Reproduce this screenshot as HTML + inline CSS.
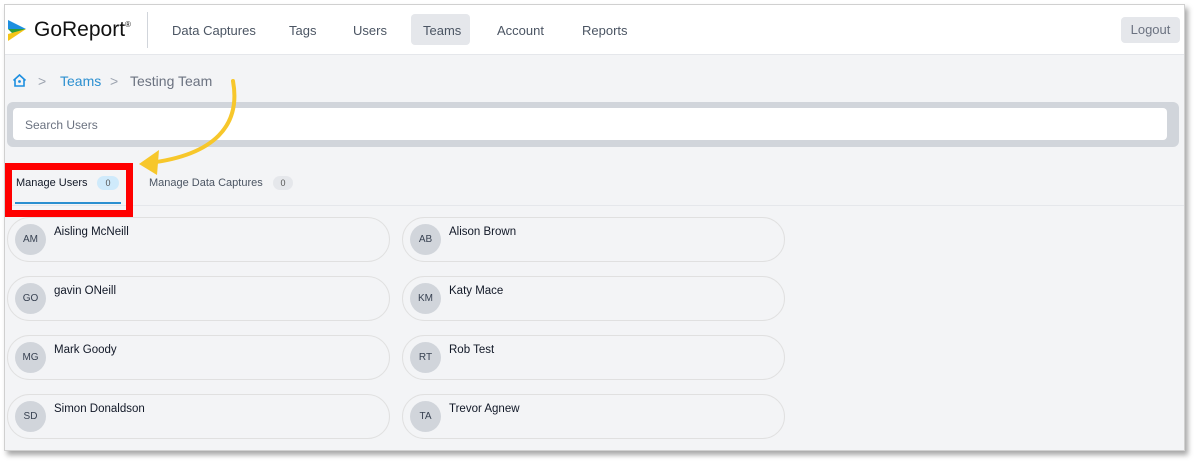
<!DOCTYPE html>
<html><head><style>
*{margin:0;padding:0;box-sizing:border-box}
body{width:1198px;height:464px;background:#fff;font-family:"Liberation Sans",sans-serif;position:relative;overflow:hidden}
.frame{position:absolute;left:4px;top:4px;width:1181px;height:447px;background:#f3f4f6;border:1px solid #d0d0d0;box-shadow:3px 4px 5px rgba(0,0,0,.35);overflow:hidden}
.nav{position:absolute;left:0;top:0;right:0;height:50px;background:#fff;border-bottom:1px solid #e5e7eb}
.nav a{position:absolute;top:18px;font-size:13px;color:#4b5563}
.teams{position:absolute;left:406px;top:9px;width:59px;height:31px;background:#e5e7eb;border-radius:4px}
.logout{position:absolute;left:1116px;top:12px;width:59px;height:26px;background:#e5e7eb;border-radius:4px;font-size:13px;color:#6b7280;text-align:center;line-height:26px}
.abs{position:absolute}
.card{position:absolute;width:383px;height:45px;border:1px solid #e0e0e0;border-radius:23px;background:#f3f4f6}
.av{position:absolute;left:7px;top:6px;width:31px;height:31px;border-radius:50%;background:#d1d5db;font-size:10px;color:#374151;text-align:center;line-height:31px}
.nm{position:absolute;left:46px;top:8px;font-size:11.5px;color:#111827}
</style></head><body>
<div class="frame">
 <div class="nav">
  <svg class="abs" style="left:3px;top:15px" width="20" height="22" viewBox="0 0 20 22"><polygon points="0,0 18,9 0,9" fill="#1d8fe0"/><polygon points="0,9 18,9 5,14" fill="#2a9d3a"/><polygon points="0,14 18,9 0,21" fill="#f5c518"/></svg>
  <div class="abs" style="left:29px;top:13px;font-size:21px;color:#111">GoReport<sup style="font-size:8px;vertical-align:top;position:relative;top:2px">®</sup></div>
  <div class="abs" style="left:142px;top:7px;width:1px;height:36px;background:#d1d5db"></div>
  <div class="teams"></div>
  <a style="left:167px">Data Captures</a><a style="left:284px">Tags</a><a style="left:348px">Users</a><a style="left:418px">Teams</a><a style="left:492px">Account</a><a style="left:577px">Reports</a>
  <div class="logout">Logout</div>
 </div>
 <svg class="abs" style="left:7px;top:68px" width="15" height="15" viewBox="0 0 15 15"><path d="M1.5 7.5L7.5 2l6 5.5M3 6.5V13h9V6.5" fill="none" stroke="#1d8fe0" stroke-width="1.6"/><circle cx="7.5" cy="8.5" r="1.4" fill="#1d8fe0"/></svg>
 <div class="abs" style="left:33px;top:68px;font-size:14px;color:#9ca3af">&gt;</div>
 <div class="abs" style="left:55px;top:68px;font-size:14px;color:#2b8fd0">Teams</div>
 <div class="abs" style="left:105px;top:68px;font-size:14px;color:#9ca3af">&gt;</div>
 <div class="abs" style="left:125px;top:68px;font-size:14px;color:#6b7280">Testing Team</div>
 <div class="abs" style="left:2px;top:97px;width:1172px;height:45px;background:#d1d5db;border-radius:6px"></div>
 <div class="abs" style="left:8px;top:103px;width:1154px;height:32px;background:#fff;border-radius:4px;font-size:12px;color:#6b7280;padding:10px 0 0 12px">Search Users</div>
 <div class="abs" style="left:0;top:200px;width:1181px;height:1px;background:#e5e7eb"></div>
 <div class="abs" style="left:11px;top:172px;font-size:11px;color:#111827">Manage Users</div>
 <div class="abs" style="left:92px;top:171px;width:22px;height:14px;border-radius:7px;background:#cfeafb;font-size:9px;color:#555;text-align:center;line-height:14px">0</div>
 <div class="abs" style="left:10px;top:197px;width:106px;height:2px;background:#2b8fd0"></div>
 <div class="abs" style="left:144px;top:172px;font-size:11px;color:#4b5563">Manage Data Captures</div>
 <div class="abs" style="left:268px;top:171px;width:20px;height:14px;border-radius:7px;background:#e5e7eb;font-size:9px;color:#555;text-align:center;line-height:14px">0</div>
 <div class="abs" style="left:0;top:158px;width:128px;height:54px;border:7px solid #ff0000"></div>
 <svg class="abs" style="left:0;top:0" width="300" height="200"><path d="M228 76 C236 120 210 150 144 158" fill="none" stroke="#f7c72b" stroke-width="4" stroke-linecap="round"/><polygon points="134,159 154,145 152,170" fill="#f7c72b"/></svg>
 <div class="card" style="left:2px;top:212px"><div class="av">AM</div><div class="nm">Aisling McNeill</div></div>
 <div class="card" style="left:2px;top:271px"><div class="av">GO</div><div class="nm">gavin ONeill</div></div>
 <div class="card" style="left:2px;top:330px"><div class="av">MG</div><div class="nm">Mark Goody</div></div>
 <div class="card" style="left:2px;top:389px"><div class="av">SD</div><div class="nm">Simon Donaldson</div></div>
 <div class="card" style="left:397px;top:212px"><div class="av">AB</div><div class="nm">Alison Brown</div></div>
 <div class="card" style="left:397px;top:271px"><div class="av">KM</div><div class="nm">Katy Mace</div></div>
 <div class="card" style="left:397px;top:330px"><div class="av">RT</div><div class="nm">Rob Test</div></div>
 <div class="card" style="left:397px;top:389px"><div class="av">TA</div><div class="nm">Trevor Agnew</div></div>
</div>
</body></html>
